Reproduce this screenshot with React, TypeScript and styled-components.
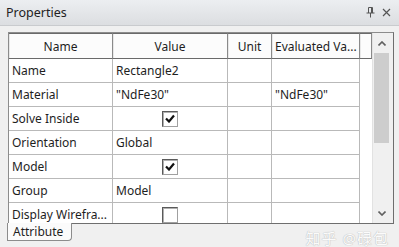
import { Fragment } from "react";
import styled, { createGlobalStyle } from "styled-components";

const GlobalStyle = createGlobalStyle`
	html, body {
		margin: 0;
		padding: 0;
		background: #f0f0f0;
	}
	body {
		font-family: "Noto Sans", "Noto Sans CJK SC", sans-serif;
		font-size: 12px;
		color: #1e1e1e;
	}
`;

const Panel = styled.div`
	width: 399px;
	height: 247px;
	display: flex;
	flex-direction: column;
	overflow: hidden;
	position: relative;
	background: #f0f0f0;
`;

const TitleBar = styled.div`
	height: 25px;
	border-bottom: 1px solid #c9cbce;
	background: linear-gradient(#eceef1, #dcdee1);
	display: flex;
	align-items: center;
	justify-content: space-between;
	padding: 0 8px 0 6px;
`;

const Title = styled.span`
	font-size: 12.5px;
	color: #222;
`;

const TitleButtons = styled.div`
	display: flex;
	gap: 7px;
	align-items: center;
`;

const Body = styled.div`
	padding: 6px 5px 0 8px;
	display: flex;
	flex-direction: column;
`;

const Frame = styled.div`
	height: 190px;
	border: 1px solid #8c8c8c;
	border-right-color: #6e6e6e;
	border-bottom-color: #6e6e6e;
	background: #fff;
	display: flex;
	overflow: hidden;
`;

const Table = styled.div`
	display: grid;
	grid-template-columns: 104px 115px 44px 88px 12px;
	grid-auto-rows: 24px;
	grid-template-rows: 26px;
	align-content: start;
`;

const HeadCell = styled.div<{ left?: boolean }>`
	border-top: 1px solid #6a6a6a;
	border-bottom: 1px solid #6a6a6a;
	border-right: 1px solid #8a8a8a;
	box-shadow: inset 1px 0 0 #e8e8e8;
	background: #fcfcfc;
	display: flex;
	align-items: center;
	justify-content: ${p => (p.left ? "flex-start" : "center")};
	padding: 0 3px;
	white-space: nowrap;
	overflow: hidden;
	font-size: 12px;
`;

const Cell = styled.div<{ center?: boolean }>`
	border-right: 1px solid #b9b9b9;
	border-bottom: 1px solid #b9b9b9;
	display: flex;
	align-items: center;
	justify-content: ${p => (p.center ? "center" : "flex-start")};
	padding: 0 3px;
	white-space: nowrap;
	overflow: hidden;
	text-overflow: ellipsis;
`;

const BlankCell = styled.div`
	background: #fff;
`;

const ScrollBar = styled.div`
	width: 21px;
	background: #f0f0f0;
	border-left: 1px solid #e2e2e2;
	display: flex;
	flex-direction: column;
	align-items: center;
	padding-right: 3px;
`;

const Arrow = styled.div`
	height: 20px;
	display: flex;
	align-items: center;
	justify-content: center;
`;

const Thumb = styled.div`
	width: 15px;
	height: 90px;
	background: #cdcdcd;
`;

const Spacer = styled.div`
	flex: 1;
`;

const Check = styled.div`
	width: 14px;
	height: 14px;
	border: 1px solid #a0a0a0;
	border-top-color: #5a5a5a;
	border-left-color: #5a5a5a;
	box-shadow: inset 1px 1px 0 #b0b0b0;
	background: #fff;
	display: flex;
	align-items: center;
	justify-content: center;
`;

const Tabs = styled.div`
	display: flex;
	margin-top: -1px;
`;

const Tab = styled.div`
	height: 17px;
	margin-left: -1px;
	padding: 0 8px 0 5px;
	border: 1px solid #8c8c8c;
	border-top: none;
	border-radius: 0 0 4px 0;
	background: #fbfbfb;
	display: flex;
	align-items: center;
	font-size: 12px;
`;

const Watermark = styled.div`
	position: absolute;
	right: 10px;
	bottom: 0;
	font-size: 15px;
	line-height: 17px;
	color: #fbfbfb;
	text-shadow: 0 0 1px #bdbdbd, 0 0 1px #bdbdbd;
	letter-spacing: 1px;
`;

type Row = { name: string; value?: string; check?: boolean; evaluated?: string };

const rows: Row[] = [
	{ name: "Name", value: "Rectangle2" },
	{ name: "Material", value: '"NdFe30"', evaluated: '"NdFe30"' },
	{ name: "Solve Inside", check: true },
	{ name: "Orientation", value: "Global" },
	{ name: "Model", check: true },
	{ name: "Group", value: "Model" },
	{ name: "Display Wirefra...", check: false },
];

function CheckBox({ checked }: { checked: boolean }) {
	return (
		<Check>
			{checked && (
				<svg width="10" height="9" viewBox="0 0 10 9">
					<path d="M1 4.5 L4 7.5 L9 1.5" fill="none" stroke="#111" strokeWidth="2.2" />
				</svg>
			)}
		</Check>
	);
}

function App() {
	return (
		<Panel>
			<GlobalStyle />
			<TitleBar>
				<Title>Properties</Title>
				<TitleButtons>
					<svg width="9" height="11" viewBox="0 0 9 11">
						<path d="M2.5 0.5 H6.5 V6 M2.5 0.5 V6 M0.5 6 H8.5 M4.5 6 V10.5 M5.5 1 V6" fill="none" stroke="#555" strokeWidth="1" />
					</svg>
					<svg width="9" height="9" viewBox="0 0 9 9">
						<path d="M1 1 L8 8 M8 1 L1 8" stroke="#555" strokeWidth="1.2" />
					</svg>
				</TitleButtons>
			</TitleBar>
			<Body>
				<Frame>
					<Table>
						<HeadCell>Name</HeadCell>
						<HeadCell>Value</HeadCell>
						<HeadCell>Unit</HeadCell>
						<HeadCell left>Evaluated Va...</HeadCell>
						<HeadCell />
						{rows.map(r => (
							<Fragment key={r.name}>
								<Cell>{r.name}</Cell>
								<Cell center={r.check !== undefined}>
									{r.check !== undefined ? <CheckBox checked={r.check} /> : r.value}
								</Cell>
								<Cell />
								<Cell>{r.evaluated}</Cell>
								<BlankCell />
							</Fragment>
						))}
					</Table>
					<ScrollBar>
						<Arrow>
							<svg width="8" height="5" viewBox="0 0 8 5">
								<path d="M0.5 4.5 L4 1 L7.5 4.5" fill="none" stroke="#606060" strokeWidth="1.6" />
							</svg>
						</Arrow>
						<Thumb />
						<Spacer />
						<Arrow>
							<svg width="8" height="5" viewBox="0 0 8 5">
								<path d="M0.5 0.5 L4 4 L7.5 0.5" fill="none" stroke="#606060" strokeWidth="1.6" />
							</svg>
						</Arrow>
					</ScrollBar>
				</Frame>
				<Tabs>
					<Tab>Attribute</Tab>
				</Tabs>
			</Body>
			<Watermark>知乎 @碌包</Watermark>
		</Panel>
	);
}

export default App;
